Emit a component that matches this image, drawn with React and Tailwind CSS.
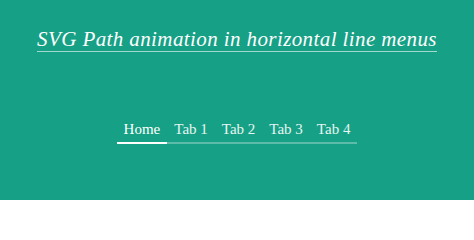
const tabs = ['Home', 'Tab 1', 'Tab 2', 'Tab 3', 'Tab 4'];

export default function App() {
  return (
    <div className="w-[474px] h-[200px] bg-[#16a085] flex flex-col items-center text-white" style={{ fontFamily: '"Liberation Serif", serif' }}>
      <h1 className="mt-[27px] text-[21px] italic leading-[24px] tracking-[0.4px] border-b border-white/60">
        SVG Path animation in horizontal line menus
      </h1>
      <nav className="mt-[68px] flex border-b-2 border-white/30">
        {tabs.map((t, i) => (
          <a key={t} href="#" className={'relative px-[7px] pb-[4px] text-[15px] leading-[18px] ' + (i === 0 ? 'text-white' : 'text-white/90')}>
            {t}
            {i === 0 && <span className="absolute left-0 right-0 -bottom-[2px] h-[2px] bg-white" />}
          </a>
        ))}
      </nav>
    </div>
  );
}
